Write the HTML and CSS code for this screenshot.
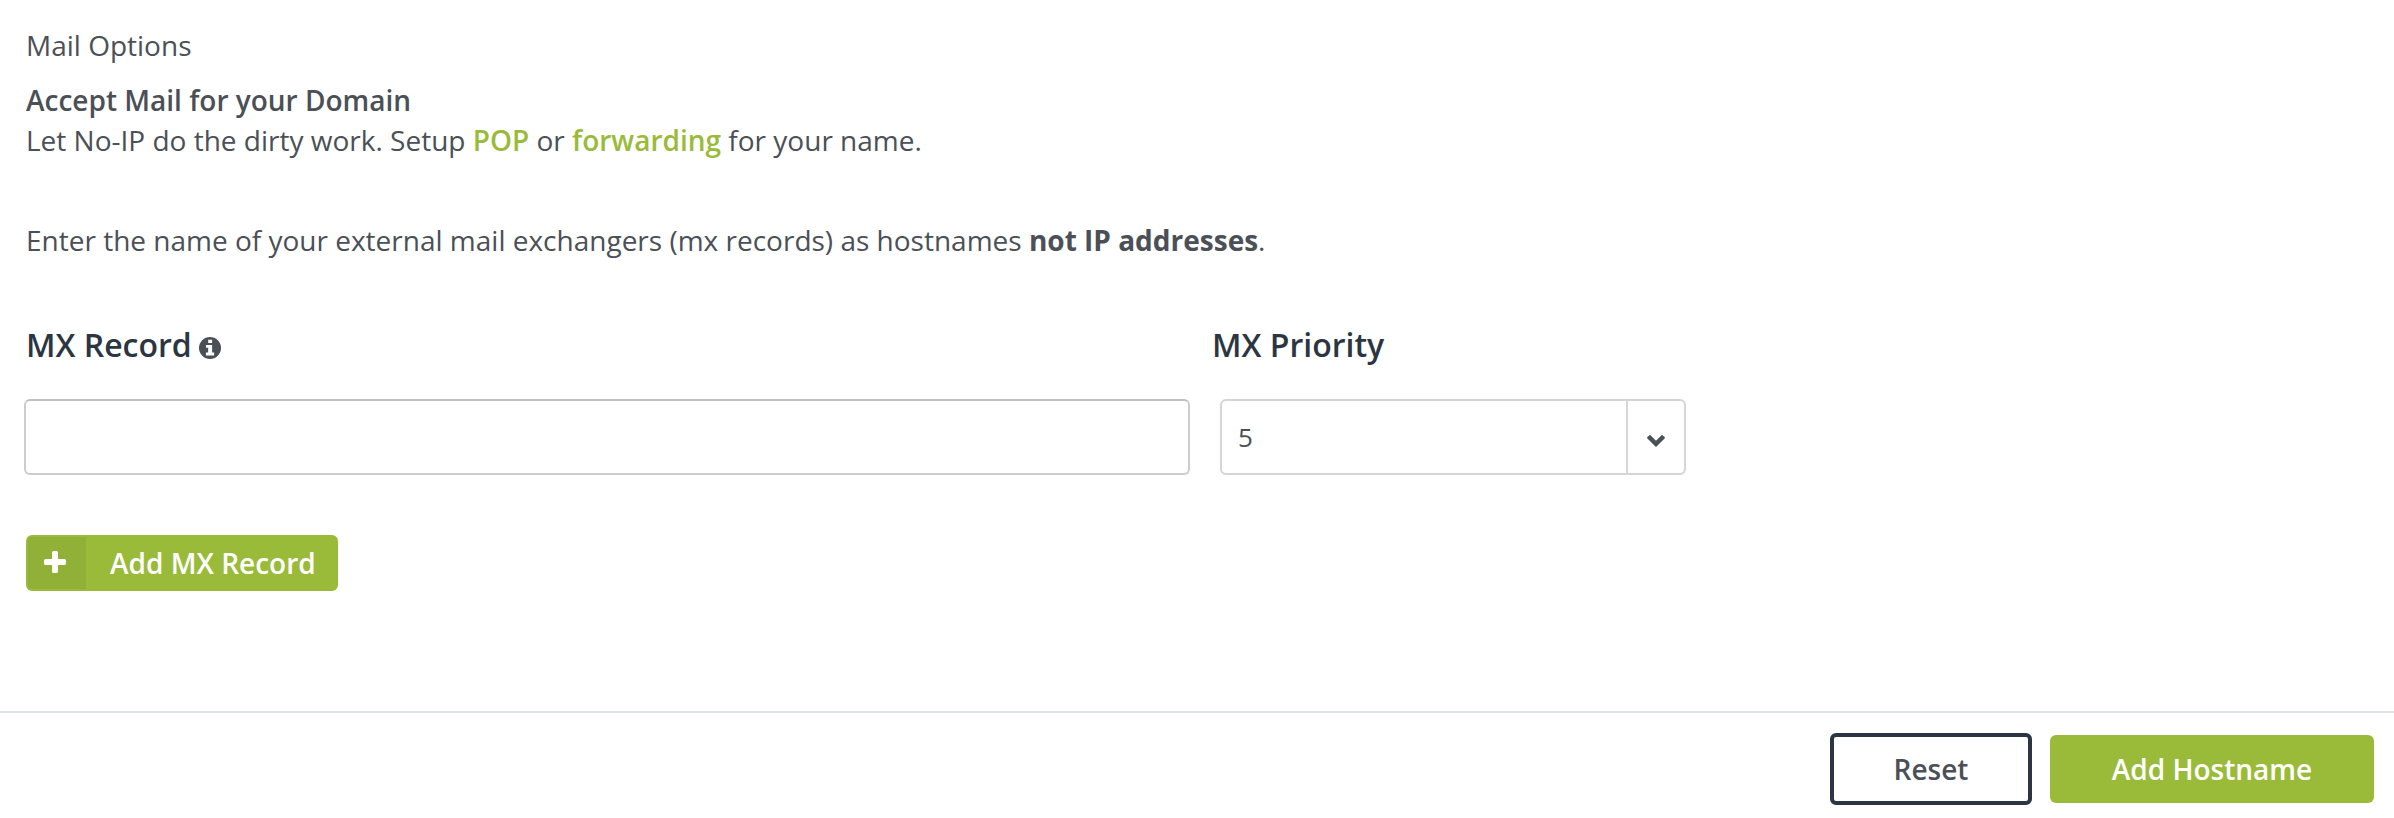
FILE: index.html
```html
<!DOCTYPE html>
<html lang="en">
<head>
    <meta charset="UTF-8">
    <meta name="viewport" content="width=device-width, initial-scale=1.0">
    <title>Mail Options</title>
    <link rel="stylesheet" href="styles.css">
</head>
<body>
    <form class="mail-form">
        <div class="mail-options">
            <p class="section-name">Mail Options</p>
            <p class="intro"><span class="intro-title">Accept Mail for your Domain</span><br>Let No-IP do the dirty work. Setup <a class="link" href="#">POP</a> or <a class="link" href="#">forwarding</a> for your name.</p>
            <p class="note">Enter the name of your external mail exchangers (mx records) as hostnames <strong>not IP addresses</strong>.</p>

            <div class="mx-row">
                <div class="mx-record">
                    <label class="label" for="mxRecord">MX Record
                        <svg class="info-icon" viewBox="0 0 24 24">
                            <circle cx="12" cy="12" r="12" fill="#4b5057"/>
                            <path fill="#fff" d="M10 3h4.300v3.600H10zM7.600 8.600h6.700V17h2.200v3.200H7.600V17H10v-5.200H7.600z"/>
                        </svg>
                    </label>
                    <input class="mx-input" id="mxRecord" type="text">
                </div>
                <div class="mx-priority">
                    <span class="label">MX Priority</span>
                    <div class="select">
                        <span class="select-value">5</span>
                        <span class="select-arrow">
                            <svg class="chevron" viewBox="0 0 18 12"><path fill="#4b5057" d="M.4 3.400Q-.2 2.700.4 2L2.200.4Q3 -.2 3.700.4L9 5.700 14.300.4Q15-.2 15.800.4L17.600 2Q18.200 2.700 17.600 3.400L9 12z"/></svg>
                        </span>
                    </div>
                </div>
            </div>

            <button class="btn-add" type="button">
                <span class="btn-icon">
                    <svg class="plus" viewBox="0 0 22 22"><path fill="#fff" d="M9.5 0h3Q14 0 14 1.5V8h6.5Q22 8 22 9.5v3Q22 14 20.5 14H14v6.5Q14 22 12.5 22h-3Q8 22 8 20.5V14H1.5Q0 14 0 12.5v-3Q0 8 1.5 8H8V1.5Q8 0 9.500 0z"/></svg>
                </span>
                <span class="btn-text">Add MX Record</span>
            </button>
        </div>

        <!-- Form actions -->
        <div class="footer">
            <button class="btn btn-reset" type="reset">Reset</button>
            <button class="btn btn-submit" type="button">Add Hostname</button>
        </div>
    </form>
</body>
</html>
```

FILE: styles.css
```css
* {
    box-sizing: border-box;
}

body {
    margin: 0;
    font-family: "Open Sans", sans-serif;
    font-size: 28px;
    line-height: 40px;
    color: #4b5057;
    background: #fff;
}

p {
    margin: 0;
}

button {
    font-family: inherit;
    font-size: 28px;
    font-weight: 600;
    line-height: 40px;
    padding: 0;
    border: 0;
    border-radius: 6px;
    white-space: nowrap;
}

.mail-options {
    height: 711px;
    padding: 25px 26px 0;
}

.intro {
    margin-top: 15px;
}

.intro-title {
    font-weight: 600;
}

.link {
    color: #9abb3a;
    font-weight: 600;
    text-decoration: none;
}

.note {
    margin-top: 60px;
}

.mx-row {
    display: flex;
    margin-top: 60px;
}

.mx-record {
    width: 1186px;
}

.label {
    display: flex;
    align-items: center;
    gap: 7px;
    height: 50px;
    font-size: 32px;
    font-weight: 600;
    color: #2c3643;
}

.info-icon {
    width: 22px;
    height: 22px;
    margin-top: 6px;
}

.mx-input {
    display: block;
    width: 1166px;
    height: 76px;
    margin: 29px 0 0 -2px;
    padding: 0 16px;
    border: 2px solid #ccc;
    border-top-color: #c0c0c0;
    border-radius: 6px;
    font: inherit;
}

/* Priority dropdown */
.select {
    display: flex;
    width: 466px;
    height: 76px;
    margin: 29px 0 0 8px;
    border: 2px solid #d5d5d5;
    border-radius: 6px;
}

.select-value {
    flex: 1;
    padding: 16px 0 0 16px;
    font-size: 26px;
}

.select-arrow {
    width: 58px;
    padding: 34px 0 0 19px;
    border-left: 2px solid #d5d5d5;
    line-height: 0;
}

.chevron {
    width: 18px;
    height: 12px;
}

/* Green button with icon block */
.btn-add {
    display: flex;
    width: 312px;
    height: 56px;
    margin-top: 60px;
    padding: 2px;
    background: #9abb3a;
    color: #fff;
}

.btn-icon {
    width: 58px;
    height: 52px;
    padding: 14px 0 0 16px;
    background: #90b037;
    border-radius: 4px 0 0 4px;
    line-height: 0;
    text-align: left;
}

.plus {
    width: 22px;
    height: 22px;
}

.btn-text {
    padding: 6px 0 0 24px;
}

/* Footer */
.footer {
    display: flex;
    justify-content: flex-end;
    align-items: center;
    gap: 18px;
    height: 107px;
    padding: 7px 20px 0 0;
    border-top: 2px solid #dee2e6;
}

.btn-reset {
    width: 202px;
    height: 72px;
    border: 4px solid #2c3643;
    background: #fff;
    color: #4b5057;
}

.btn-submit {
    width: 324px;
    height: 68px;
    background: #9abb3a;
    color: #fff;
}
```
